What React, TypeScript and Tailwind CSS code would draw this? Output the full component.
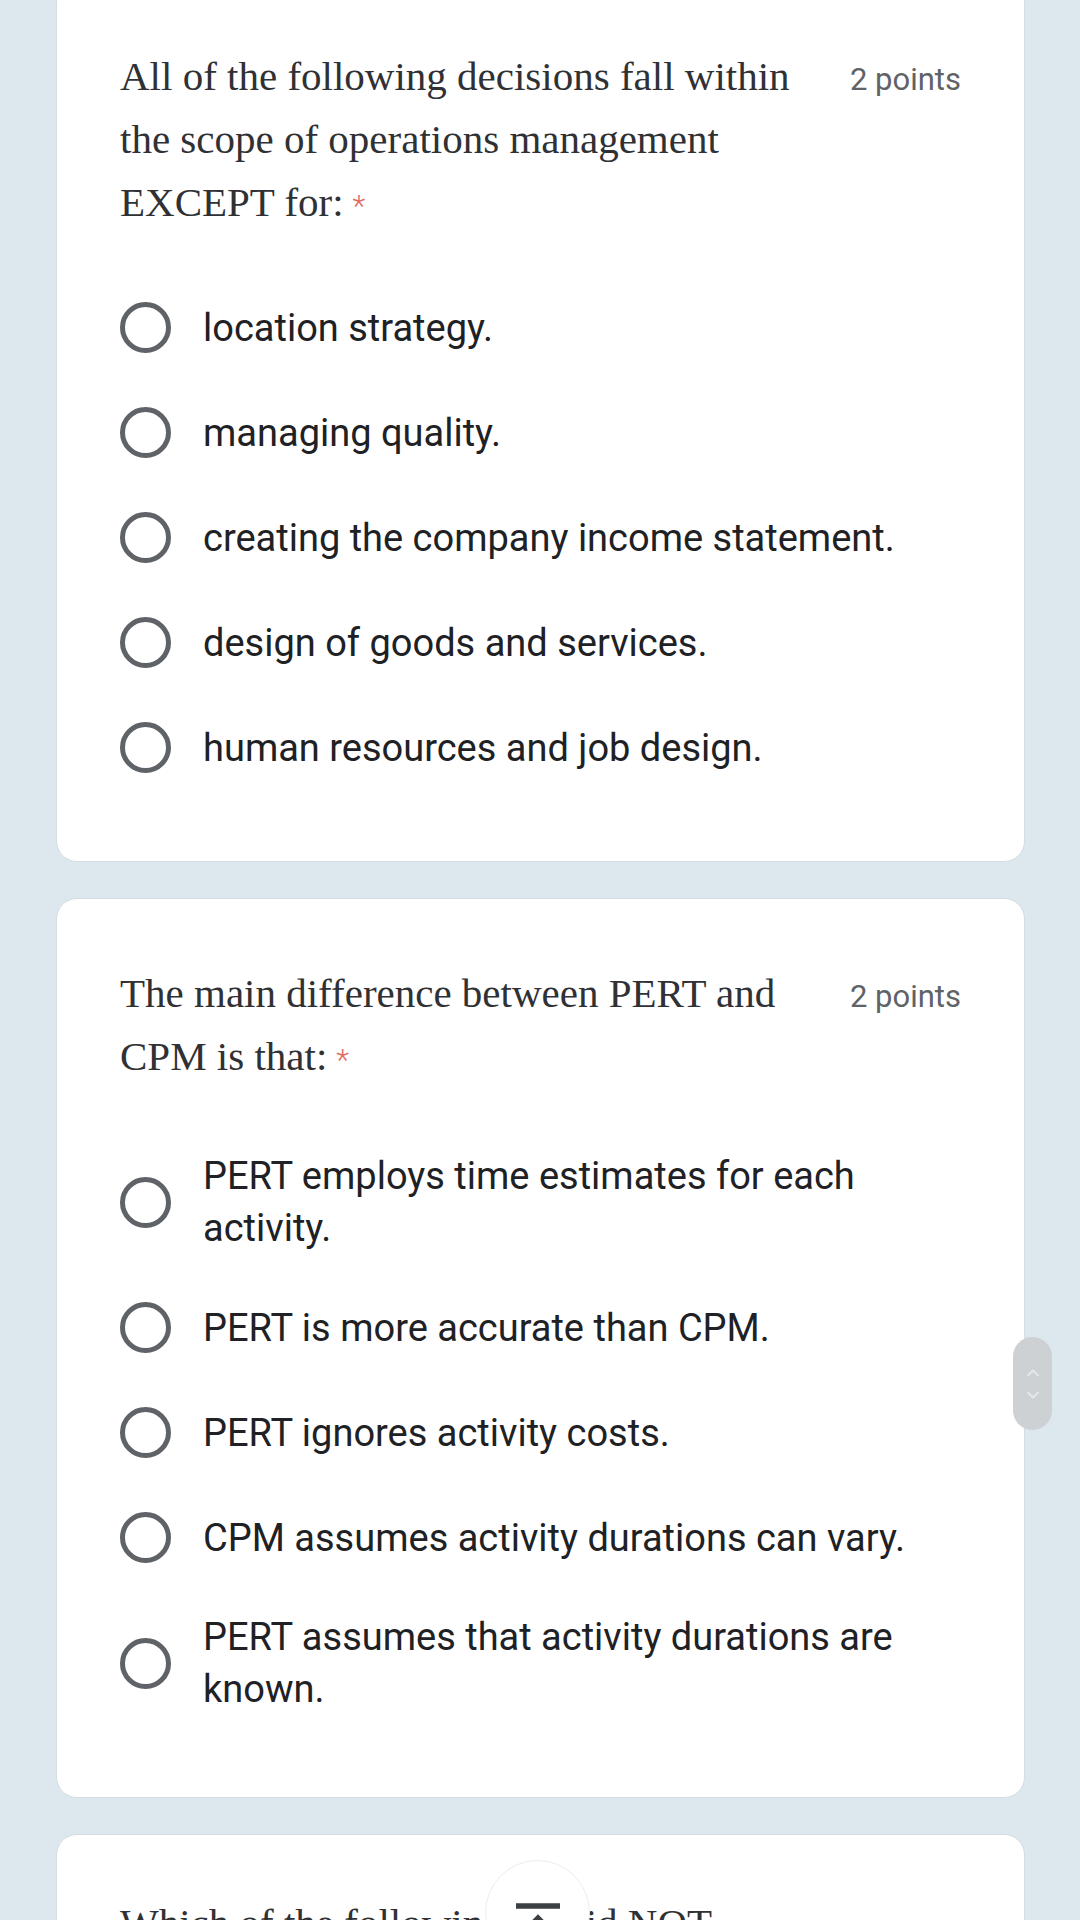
import React from 'react';

type Question = {
    title: string;
    options: string[];
};

const questions: Question[] = [
    {
        title: 'All of the following decisions fall within the scope of operations management EXCEPT for:',
        options: [
            'location strategy.',
            'managing quality.',
            'creating the company income statement.',
            'design of goods and services.',
            'human resources and job design.',
        ],
    },
    {
        title: 'The main difference between PERT and CPM is that:',
        options: [
            'PERT employs time estimates for each activity.',
            'PERT is more accurate than CPM.',
            'PERT ignores activity costs.',
            'CPM assumes activity durations can vary.',
            'PERT assumes that activity durations are known.',
        ],
    },
];

const serif = { fontFamily: '"Liberation Serif", "Times New Roman", serif' };
const sans = { fontFamily: 'Roboto, "Liberation Sans", Arial, sans-serif' };

function QuestionTitle({ title }: { title: string }) {
    return (
        <div className="flex items-baseline">
            <div className="flex-1 text-[41px] leading-[63px] text-[#303134]" style={serif}>
                {title}
                <span className="ml-[9px] text-[30px] font-light text-[#e06a60]" style={sans}>*</span>
            </div>
            <div className="ml-[40px] shrink-0 text-[31px] text-[#5f6368]" style={sans}>
                2 points
            </div>
        </div>
    );
}

function RadioOption({ label }: { label: string }) {
    return (
        <div className="flex items-center gap-[32px] py-[21px]">
            <div className="flex h-[63px] w-[51px] shrink-0 items-center">
                <div className="h-[51px] w-[51px] rounded-full border-[5px] border-[#5f6368]" />
            </div>
            <div className="flex-1 text-[38px] leading-[52px] text-[#202124]" style={sans}>
                {label}
            </div>
        </div>
    );
}

function QuestionCard({ q }: { q: Question }) {
    return (
        <div className="rounded-[21px] border border-[#d6dde2] bg-white px-[63px] pb-[61px] pt-[63px]">
            <QuestionTitle title={q.title} />
            <div className="mt-[38px] flex flex-col">
                {q.options.map((o) => (
                    <RadioOption key={o} label={o} />
                ))}
            </div>
        </div>
    );
}

export default function App() {
    return (
        <div className="relative h-[1920px] w-[1080px] overflow-hidden bg-[#dde7ee]">
            <div className="-mt-[19px] flex flex-col gap-[36px] pl-[56px] pr-[55px]">
                {questions.map((q) => (
                    <QuestionCard key={q.title} q={q} />
                ))}
                <div className="rounded-[21px] border border-[#d6dde2] bg-white px-[63px] pb-[63px] pt-[57px]">
                    <div className="w-[690px] text-[41px] leading-[63px] text-[#303134]" style={serif}>
                        Which of the following is said NOT likely to improve project control?
                    </div>
                </div>
            </div>

            {/* scroll thumb */}
            <div className="absolute left-[1013px] top-[1337px] flex h-[93px] w-[39px] flex-col items-center justify-center gap-[14px] rounded-full bg-[#cdd1d4]">
                <svg width="14" height="9" viewBox="0 0 14 9" fill="none">
                    <path d="M2 7.5 L7 2.5 L12 7.5" stroke="#e4e7ea" strokeWidth="2" strokeLinecap="round" />
                </svg>
                <svg width="14" height="9" viewBox="0 0 14 9" fill="none">
                    <path d="M2 1.5 L7 6.5 L12 1.5" stroke="#e4e7ea" strokeWidth="2" strokeLinecap="round" />
                </svg>
            </div>

            {/* jump to top button */}
            <div className="absolute left-[485px] top-[1860px] flex h-[105px] w-[105px] items-start justify-center rounded-full border border-[#ececec] bg-white">
                <svg className="mt-[34px]" width="66" height="66" viewBox="0 0 24 24" fill="#3c4043">
                    <path d="M8 11h3v10h2V11h3l-4-4-4 4zM4 3v2h16V3H4z" />
                </svg>
            </div>
        </div>
    );
}
